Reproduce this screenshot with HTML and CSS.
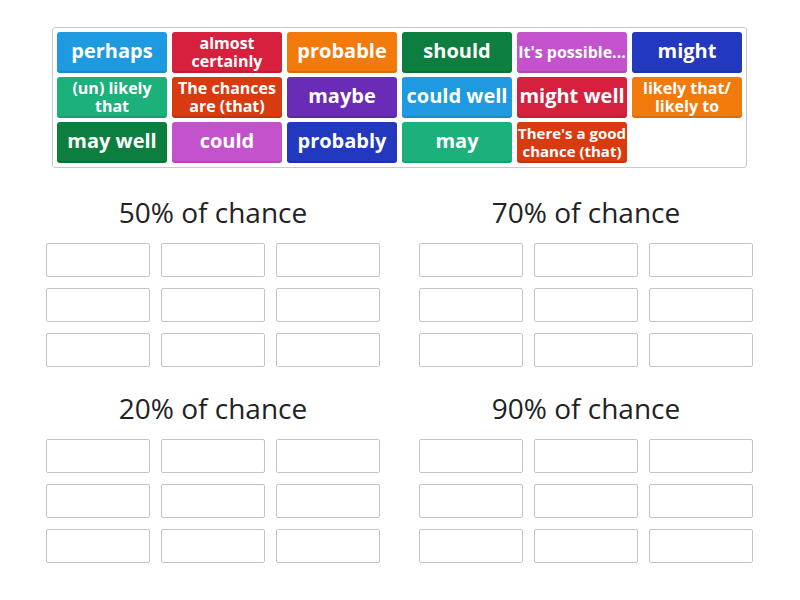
FILE: index.html
```html
<!DOCTYPE html>
<html>
<head>
<meta charset="utf-8">
<link rel="stylesheet" href="styles.css">
</head>
<body>
<div class="bank">
  <div class="tile blue">perhaps</div>
  <div class="tile red small">almost<br>certainly</div>
  <div class="tile orange">probable</div>
  <div class="tile dgreen">should</div>
  <div class="tile magenta small">It's possible...</div>
  <div class="tile navy">might</div>
  <div class="tile green small">(un) likely<br>that</div>
  <div class="tile rorange small">The chances<br>are (that)</div>
  <div class="tile purple">maybe</div>
  <div class="tile blue">could well</div>
  <div class="tile red">might well</div>
  <div class="tile orange small">likely that/<br>likely to</div>
  <div class="tile dgreen">may well</div>
  <div class="tile magenta">could</div>
  <div class="tile navy">probably</div>
  <div class="tile green">may</div>
  <div class="tile rorange small tight">There's a good<br>chance (that)</div>
</div>
<div class="groups">
  <section class="group">
    <h2 class="title">50% of chance</h2>
    <div class="slots"><div class="slot"></div><div class="slot"></div><div class="slot"></div><div class="slot"></div><div class="slot"></div><div class="slot"></div><div class="slot"></div><div class="slot"></div><div class="slot"></div></div>
  </section>
  <section class="group">
    <h2 class="title">70% of chance</h2>
    <div class="slots"><div class="slot"></div><div class="slot"></div><div class="slot"></div><div class="slot"></div><div class="slot"></div><div class="slot"></div><div class="slot"></div><div class="slot"></div><div class="slot"></div></div>
  </section>
  <section class="group">
    <h2 class="title">20% of chance</h2>
    <div class="slots"><div class="slot"></div><div class="slot"></div><div class="slot"></div><div class="slot"></div><div class="slot"></div><div class="slot"></div><div class="slot"></div><div class="slot"></div><div class="slot"></div></div>
  </section>
  <section class="group">
    <h2 class="title">90% of chance</h2>
    <div class="slots"><div class="slot"></div><div class="slot"></div><div class="slot"></div><div class="slot"></div><div class="slot"></div><div class="slot"></div><div class="slot"></div><div class="slot"></div><div class="slot"></div></div>
  </section>
</div>
</body>
</html>
```
FILE: styles.css
```css
html, body {
  margin: 0;
  padding: 0;
  background: #ffffff;
  font-family: "Open Sans", "Noto Sans", sans-serif;
}
.bank {
  margin: 27px 0 0 52px;
  width: 685px;
  padding: 4px;
  border: 1px solid #c9c9c9;
  border-radius: 3px;
  display: grid;
  grid-template-columns: repeat(6, 110px);
  grid-auto-rows: 41px;
  column-gap: 5px;
  row-gap: 4px;
}
.tile {
  color: #ffffff;
  font-weight: 700;
  font-size: 20px;
  line-height: 24px;
  padding-bottom: 3px;
  box-sizing: border-box;
  border-radius: 3px;
  display: flex;
  align-items: center;
  justify-content: center;
  text-align: center;
  box-shadow: inset 0 -2px 0 rgba(0,0,0,0.1);
  white-space: nowrap;
}
.tile.small {
  font-size: 16px;
  line-height: 18px;
  padding-bottom: 1px;
}
.tile.tight {
  font-size: 15px;
}
.blue { background: #1e9be0; }
.red { background: #d6203d; }
.orange { background: #f27a0b; }
.dgreen { background: #0c7e3f; }
.magenta { background: #c452cc; }
.navy { background: #2138bf; }
.green { background: #1cb07b; }
.rorange { background: #d93a10; }
.purple { background: #6a2bb6; }

.groups {
  margin: 25px 0 0 46px;
  display: grid;
  grid-template-columns: 334px 334px;
  column-gap: 39px;
  row-gap: 22px;
}
.group {
  display: flex;
  flex-direction: column;
  align-items: stretch;
}
.title {
  margin: 0 0 12px 0;
  font-size: 28px;
  font-weight: 400;
  line-height: 38px;
  color: #222222;
  text-align: center;
}
.slots {
  display: grid;
  grid-template-columns: repeat(3, 104px);
  grid-auto-rows: 34px;
  gap: 11px;
}
.slot {
  border: 1px solid #c4c4c4;
  border-radius: 2px;
  background: #ffffff;
}
```
